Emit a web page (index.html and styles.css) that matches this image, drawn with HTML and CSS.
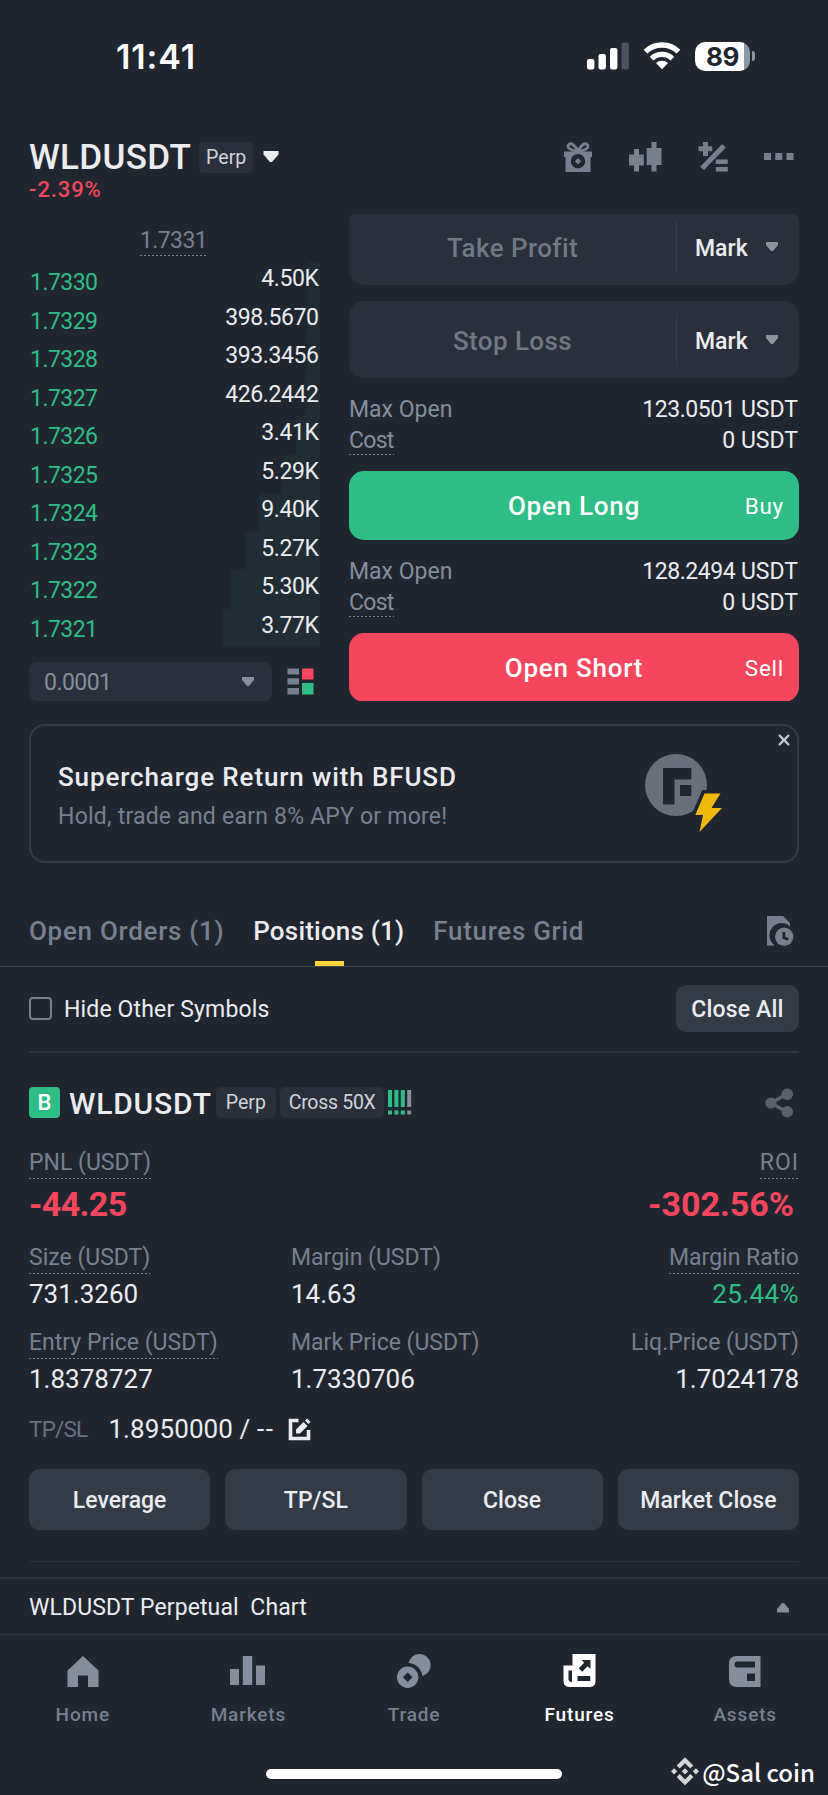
FILE: index.html
```html
<!DOCTYPE html>
<html lang="en">
<head>
  <meta charset="utf-8">
  <title>WLDUSDT Perp - Futures</title>
  <link rel="stylesheet" href="styles.css">
</head>
<body>
  <div class="screen">
    <div class="status-bar">
      <span class="clock">11:41</span>
      <div class="status-icons">
        <svg class="signal" width="42" height="28" viewBox="0 0 42 28">
          <g fill="#fff">
            <rect x="0" y="17" width="7.4" height="10.5" rx="2"/>
            <rect x="11.5" y="12" width="7.4" height="15.5" rx="2"/>
            <rect x="23" y="6" width="7.4" height="21.5" rx="2"/>
          </g>
          <rect x="34.5" y="0.5" width="7.4" height="27" rx="2" fill="#4d535e"/>
        </svg>
        <svg class="wifi" width="38" height="28" viewBox="0 0 38 28">
          <g fill="none" stroke="#fff" stroke-width="5.4">
            <path d="M2.5 9.6a24 24 0 0 1 33 0"/>
            <path d="M8.6 16.6a15 15 0 0 1 20.8 0"/>
          </g>
          <path d="M19 27.3l-6-6.2a9 9 0 0 1 12 0z" fill="#fff"/>
        </svg>
        <div class="battery"><span>89</span></div>
        <div class="battery-tip"></div>
      </div>
    </div>

    <div class="header">
      <div class="header-row">
        <h1>WLDUSDT</h1>
        <span class="chip">Perp</span>
        <svg class="pair-caret" width="16" height="13" viewBox="0 0 16 13"><path d="M.5 0h15v3.500L9 11H7L.5 3.500z" fill="#eaecef"/></svg>
        <div class="header-icons">
          <svg width="30" height="32" viewBox="0 0 30 32">
            <g fill="none" stroke="#76808f" stroke-width="2.800">
              <path d="M15 10C12 4 8 1.500 5.800 3.500 3.500 6 6 9.500 15 10z"/>
              <path d="M15 10C18 4 22 1.500 24.200 3.500 26.500 6 24 9.500 15 10z"/>
            </g>
            <path fill="#76808f" fill-rule="evenodd" d="M1 10.500h28v5.500h-1.500v15h-25V16H1zM15 13a7.200 7.200 0 1 0 0 14.400A7.200 7.200 0 1 0 15 13z"/>
            <path fill="#76808f" d="M15 17l3.200 3.200L15 23.400l-3.200-3.200z"/>
          </svg>
          <svg width="34" height="32" viewBox="0 0 34 32">
            <path fill="#76808f" d="M6 8h5v5.500h4.800v11H11V30.500H6v-6H1v-11h5zM23.500 1h5v6h5v17h-5v6.500h-5V24h-4.800V7h4.800z"/>
          </svg>
          <svg width="32" height="32" viewBox="0 0 32 32">
            <path fill="#76808f" d="M6 1h5v4.300h4.300v5H11V15H6v-4.700H1.500v-5H6zM25 3.200l3.800 3.300L7 29l-3.800-3.300zM18.800 18.500h12V23h-12zM18.800 26h12v4.500h-12z"/>
          </svg>
          <svg width="30" height="32" viewBox="0 0 30 32">
            <path fill="#76808f" d="M0 12h7v7H0zM11.300 12h7v7h-7zM22.500 12h7v7h-7z"/>
          </svg>
        </div>
      </div>
      <div class="change">-2.39%</div>
    </div>

    <div class="trade">
      <div class="book">
        <div class="mark-price"><span>1.7331</span></div>
        <div class="book-row"><i class="depth" style="width: 12px"></i><span class="price">1.7330</span><span class="amount">4.50K</span></div>
        <div class="book-row"><i class="depth" style="width: 13px"></i><span class="price">1.7329</span><span class="amount">398.5670</span></div>
        <div class="book-row"><i class="depth" style="width: 14px"></i><span class="price">1.7328</span><span class="amount">393.3456</span></div>
        <div class="book-row"><i class="depth" style="width: 15px"></i><span class="price">1.7327</span><span class="amount">426.2442</span></div>
        <div class="book-row"><i class="depth" style="width: 24px"></i><span class="price">1.7326</span><span class="amount">3.41K</span></div>
        <div class="book-row"><i class="depth" style="width: 38px"></i><span class="price">1.7325</span><span class="amount">5.29K</span></div>
        <div class="book-row"><i class="depth" style="width: 61px"></i><span class="price">1.7324</span><span class="amount">9.40K</span></div>
        <div class="book-row"><i class="depth" style="width: 75px"></i><span class="price">1.7323</span><span class="amount">5.27K</span></div>
        <div class="book-row"><i class="depth" style="width: 89px"></i><span class="price">1.7322</span><span class="amount">5.30K</span></div>
        <div class="book-row"><i class="depth" style="width: 98px"></i><span class="price">1.7321</span><span class="amount">3.77K</span></div>
        <div class="book-footer">
          <div class="tick-select">
            <span>0.0001</span>
            <svg width="12" height="10" viewBox="0 0 12 10"><path d="M0 0h12v3L7 9H5L0 3z" fill="#848e9c"/></svg>
          </div>
          <svg class="book-mode" width="27" height="27" viewBox="0 0 27 27">
            <path fill="#76808f" d="M.5.500H12V6.500H.5zM.5 10.300H12v6.200H.5zM.5 20H12v6.500H.5z"/>
            <path fill="#f6465d" d="M15 .500h11.500v11H15z"/>
            <path fill="#2ebd85" d="M15 15h11.500v11.500H15z"/>
          </svg>
        </div>
      </div>

      <div class="order-form">
        <div class="field">
          <span class="placeholder">Take Profit</span>
          <div class="trigger"><span>Mark</span> <svg width="12" height="10" viewBox="0 0 12 10"><path d="M0 0h12v3L7 9H5L0 3z" fill="#8b939f"/></svg></div>
        </div>
        <div class="field">
          <span class="placeholder">Stop Loss</span>
          <div class="trigger"><span>Mark</span> <svg width="12" height="10" viewBox="0 0 12 10"><path d="M0 0h12v3L7 9H5L0 3z" fill="#8b939f"/></svg></div>
        </div>
        <div class="info">
          <div class="info-row"><span>Max Open</span><b><span class="num">123.0501</span> USDT</b></div>
          <div class="info-row"><span class="dotted cost">Cost</span><b>0 USDT</b></div>
        </div>
        <div class="order-btn long"><span>Open Long</span><em>Buy</em></div>
        <div class="info">
          <div class="info-row"><span>Max Open</span><b><span class="num">128.2494</span> USDT</b></div>
          <div class="info-row"><span class="dotted cost">Cost</span><b>0 USDT</b></div>
        </div>
        <div class="order-btn short"><span>Open Short</span><em>Sell</em></div>
      </div>
    </div>

    <div class="banner">
      <div class="banner-text">
        <h2>Supercharge Return with BFUSD</h2>
        <p>Hold, trade and earn 8% APY or more!</p>
      </div>
      <svg class="banner-logo" width="80" height="80" viewBox="0 0 80 80">
        <circle cx="32" cy="32" r="31" fill="#69707b"/>
        <path fill="#202630" d="M19 15h28.300v11.500H30.500V51.500H19zM36 32h11.300v11H36z"/>
        <path fill="#f0b90b" stroke="#202630" stroke-width="7" paint-order="stroke" d="M60.500 40.500h16L67.500 55H78L55.500 79l3.500-17h-7.700z"/>
      </svg>
      <svg class="banner-close" width="12" height="12" viewBox="0 0 12 12"><path d="M1 1l10 10M11 1L1 11" stroke="#c6cad2" stroke-width="2.400"/></svg>
    </div>

    <div class="tabs">
      <span class="tab">Open Orders (1)</span>
      <span class="tab active">Positions (1)</span>
      <span class="tab">Futures Grid</span>
      <svg class="history" width="28" height="32" viewBox="0 0 28 32">
        <path fill="#76808f" d="M1 1h16l7 7v3.200A12 12 0 0 0 7.500 29.500L8.500 30.500H1z"/>
        <circle cx="18.200" cy="21.800" r="9.200" fill="#76808f"/>
        <path d="M17.800 17v5.500l4.500 2" fill="none" stroke="#202630" stroke-width="2.800"/>
      </svg>
    </div>

    <div class="filter">
      <i class="checkbox"></i>
      <span>Hide Other Symbols</span>
      <div class="close-all">Close All</div>
    </div>

    <div class="position">
      <div class="position-head">
        <span class="side">B</span>
        <h3>WLDUSDT</h3>
        <span class="chip">Perp</span>
        <span class="chip cross">Cross 50X</span>
        <svg class="adl" width="24" height="26" viewBox="0 0 24 26">
          <path fill="#2ebd85" d="M0 0h4v17H0zM6.400 0h4v17h-4zM12.800 0h4v17h-4zM0 20.500h4v4H0zM6.400 20.500h4v4h-4zM12.800 20.500h4v4h-4z"/>
          <path fill="#848e9c" d="M19.200 0h4v17h-4zM19.200 20.500h4v4h-4z"/>
        </svg>
        <svg class="share" width="29" height="30" viewBox="0 0 29 30">
          <g fill="#5a616d">
            <circle cx="6" cy="15" r="5.600"/><circle cx="22.300" cy="6.200" r="5.700"/><circle cx="22.300" cy="23.800" r="5.700"/>
          </g>
          <path d="M22 6L6 15l16 9" fill="none" stroke="#5a616d" stroke-width="3.600"/>
        </svg>
      </div>

      <div class="metrics">
        <div class="metric pnl"><label class="dotted">PNL (USDT)</label><div class="value">-44.25</div></div>
        <div></div>
        <div class="metric pnl roi right"><label class="dotted">ROI</label><div class="value">-302.56%</div></div>
        <div class="metric"><label class="dotted">Size (USDT)</label><div class="value">731.3260</div></div>
        <div class="metric"><label>Margin (USDT)</label><div class="value">14.63</div></div>
        <div class="metric right"><label class="dotted">Margin Ratio</label><div class="value up">25.44%</div></div>
        <div class="metric"><label class="dotted">Entry Price (USDT)</label><div class="value">1.8378727</div></div>
        <div class="metric"><label>Mark Price (USDT)</label><div class="value">1.7330706</div></div>
        <div class="metric right"><label>Liq.Price (USDT)</label><div class="value">1.7024178</div></div>
      </div>

      <div class="tpsl">
        <label>TP/SL</label>
        <span class="value">1.8950000 / <span class="empty">--</span></span>
        <svg width="23" height="23" viewBox="0 0 23 23">
          <path d="M10.500 2.500H2.500v18h18v-8.500" fill="none" stroke="#eaecef" stroke-width="3.600"/>
          <path fill="#eaecef" d="M8 11.500l7.500-7.500 4 4-7.500 7.500H8zM17 2.600L19 .5l3.600 3.600-2.100 2z"/>
        </svg>
      </div>

      <div class="actions">
        <div class="action">Leverage</div>
        <div class="action">TP/SL</div>
        <div class="action">Close</div>
        <div class="action">Market Close</div>
      </div>
    </div>

    <div class="chart-bar">
      <span>WLDUSDT Perpetual&nbsp; Chart</span>
      <svg width="12" height="10" viewBox="0 0 12 10"><path d="M0 9.500h12V6L7 0H5L0 6z" fill="#848e9c"/></svg>
    </div>

    <div class="nav">
      <div class="nav-item">
        <svg width="36" height="36" viewBox="0 0 36 36"><path fill="#848e9c" d="M18 3L33.500 17.500V34H23V22.500H13V34H2.500V17.500z"/></svg>
        <span>Home</span>
      </div>
      <div class="nav-item">
        <svg width="36" height="36" viewBox="0 0 36 36"><path fill="#848e9c" d="M0 16h9v16H0zM12.800 3h9.400v29h-9.400zM26 12.500h9V32h-9z"/></svg>
        <span>Markets</span>
      </div>
      <div class="nav-item">
        <svg width="36" height="36" viewBox="0 0 36 36">
          <path fill="#848e9c" d="M12.500 10A11.200 11.200 0 1 1 26.500 23A15 15 0 0 0 12.500 10z"/>
          <path fill="#848e9c" fill-rule="evenodd" d="M11.700 13.500a10.700 10.700 0 1 0 0 21.400a10.700 10.700 0 1 0 0-21.400zM11.700 19.400l4.800 4.800-4.800 4.800-4.800-4.800z"/>
        </svg>
        <span>Trade</span>
      </div>
      <div class="nav-item active">
        <svg width="36" height="36" viewBox="0 0 36 36">
          <path fill="#fff" d="M10.500 1h23v27q0 6-6 6H8q-6.500 0-6.500-6V12.500h9z"/>
          <path fill="#202630" d="M6.500 17.500H10V29q-3.500 0-3.500-3zM15.500 23h12.800v5H15.500zM19.500 7h9v9l-2.800-2.800-5.500 5.500-3.500-3.500 5.500-5.500z"/>
        </svg>
        <span>Futures</span>
      </div>
      <div class="nav-item">
        <svg width="36" height="36" viewBox="0 0 36 36">
          <path fill="#848e9c" d="M10 3h23.500v31H10q-8 0-8-8V11q0-8 8-8z"/>
          <path fill="#202630" d="M10.500 8.500H28v6H10.500q-3 0-3-3t3-3zM20 20.500h8v7.500h-8z"/>
        </svg>
        <span>Assets</span>
      </div>
    </div>

    <div class="home-indicator"></div>

    <div class="watermark">
      <svg width="28" height="29" viewBox="0 0 28 29">
        <g fill="#d4d5d7">
          <path d="M14 .300l8.300 8.200-3 3L14 6.200l-5.300 5.300-3-3zM14 28.300l8.300-8.200-3-3L14 22.400l-5.300-5.300-3 3z"/>
          <path d="M14 11.200l3.200 3.100L14 17.400l-3.200-3.100zM3.100 11.200l3.100 3.100-3.100 3.100L0 14.300zM24.900 11.200l3.100 3.100-3.100 3.100-3.100-3.100z"/>
        </g>
      </svg>
      <span>@Sal coin</span>
    </div>
  </div>
</body>
</html>
```

FILE: styles.css
```css
* {
  box-sizing: border-box;
}

body {
  margin: 0;
  background-color: #202630;
  color: #eaecef;
  font-family: Roboto, sans-serif;
  font-size: 23px;
}

h1, h2, h3, p {
  margin: 0;
}

svg {
  display: block;
  flex-shrink: 0;
}

.screen {
  position: relative;
  width: 828px;
  height: 1795px;
  display: flex;
  flex-direction: column;
  overflow: hidden;
}

/* Status bar */
.status-bar {
  height: 112px;
  padding: 0 73px 0 116px;
  display: flex;
  align-items: center;
  justify-content: space-between;
}

.clock {
  font-family: Inter, sans-serif;
  font-size: 34px;
  font-weight: 600;
  color: #fff;
  letter-spacing: 0.9px;
}

.status-icons {
  display: flex;
  align-items: center;
}

.wifi {
  margin: 0 14px;
}

.battery {
  width: 55px;
  height: 29px;
  border-radius: 10px;
  background: linear-gradient(to right, #fff 49px, #8d96a3 49px);
  color: #202630;
  font-family: Inter, sans-serif;
  font-size: 26px;
  font-weight: 700;
  line-height: 29px;
  text-align: center;
  letter-spacing: -0.3px;
}

.battery-tip {
  width: 3px;
  height: 10px;
  margin-left: 2px;
  border-radius: 0 4px 4px 0;
  background-color: #8d96a3;
}

/* Pair header */
.header {
  height: 102px;
  padding: 29px 34px 0 29px;
}

.header-row {
  display: flex;
  align-items: center;
  height: 32px;
}

h1 {
  font-size: 35px;
  font-weight: 500;
  line-height: 32px;
  letter-spacing: 0.3px;
  padding-top: 2px;
}

.chip {
  height: 31px;
  padding: 0 7px;
  border-radius: 5px;
  background-color: #29303b;
  color: #d0d4da;
  font-size: 19.5px;
  line-height: 32px;
}

.header .chip {
  margin-left: 8px;
}

.pair-caret {
  margin-left: 10px;
}

.header-icons {
  display: flex;
  gap: 35px;
  margin-left: auto;
}

.change {
  margin-top: 4px;
  font-size: 22px;
  font-weight: 500;
  line-height: 26px;
  letter-spacing: 0.9px;
  color: #f6465d;
}

/* Order book and order form */
.trade {
  display: flex;
  gap: 29px;
  height: 487px;
  padding: 0 29px;
}

.book {
  width: 291px;
  letter-spacing: -0.55px;
}

.mark-price {
  height: 48px;
  padding-top: 10px;
  text-align: center;
  color: #76808f;
}

.mark-price span {
  display: inline-block;
  height: 32px;
  line-height: 33px;
  margin-right: 2px;
}

/* Dotted underline under the tappable labels */
.mark-price span,
.dotted {
  background: repeating-linear-gradient(to right, #76808f 0 2px, transparent 2px 4px) left bottom / 100% 1.5px no-repeat;
}

.book-row {
  position: relative;
  display: flex;
  justify-content: space-between;
  height: 38.5px;
  padding: 0 1.5px 0 1px;
  line-height: 41px;
}

.depth {
  position: absolute;
  top: 0;
  right: 0;
  height: 100%;
  background-color: #212d35;
}

.price {
  position: relative;
  color: #2ebd85;
}

.amount {
  position: relative;
  line-height: 34px;
  letter-spacing: -0.4px;
}

.book-footer {
  display: flex;
  align-items: center;
  gap: 15px;
  margin-top: 15px;
}

.tick-select {
  display: flex;
  align-items: center;
  justify-content: space-between;
  width: 243px;
  height: 39px;
  padding: 0 18px 0 15px;
  border-radius: 8px;
  background-color: #29303b;
  color: #848e9c;
}

.tick-select span {
  padding-top: 2px;
}

.order-form {
  width: 450px;
  overflow: hidden;
}

.field {
  display: flex;
  align-items: center;
  height: 77px;
  border-radius: 15px;
  background-color: #29303b;
}

/* First field is scrolled slightly under the header */
.field:first-child {
  margin-top: -6px;
  margin-bottom: 16px;
}

.placeholder {
  flex: 1;
  padding-top: 2px;
  text-align: center;
  font-size: 26px;
  font-weight: 500;
  letter-spacing: 0.4px;
  color: #6f7985;
}

.trigger {
  display: flex;
  align-items: center;
  justify-content: space-between;
  width: 123px;
  height: 54px;
  padding: 0 21px 0 18px;
  border-left: 1px solid #333b47;
  font-weight: 500;
}

.trigger span {
  padding-top: 3px;
}

.info {
  padding: 15px 1px 16px 0;
}

.info-row {
  display: flex;
  justify-content: space-between;
  height: 31px;
  line-height: 33px;
  color: #848e9c;
}

.info-row b {
  font-weight: 400;
  color: #eaecef;
}

.num {
  letter-spacing: -0.45px;
}

.cost {
  letter-spacing: -0.7px;
}

.order-btn {
  position: relative;
  height: 69px;
  border-radius: 15px;
  color: #fff;
  font-size: 26px;
  font-weight: 500;
  line-height: 71px;
  letter-spacing: 0.75px;
  text-align: center;
}

.order-btn em {
  position: absolute;
  right: 15px;
  font-size: 22.5px;
  font-style: normal;
  font-weight: 400;
}

.long {
  background-color: #2ebd85;
}

.short {
  background-color: #f6465d;
}

/* Promo banner */
.banner {
  position: relative;
  display: flex;
  justify-content: space-between;
  height: 139px;
  margin: 23px 29px 0;
  padding: 27px 73px 0 27px;
  border: 2px solid #333b47;
  border-radius: 16px;
}

h2 {
  margin-top: 6px;
  font-size: 26px;
  font-weight: 500;
  line-height: 36px;
  letter-spacing: 0.88px;
}

.banner p {
  margin-top: 4px;
  line-height: 36px;
  letter-spacing: 0.22px;
  color: #76808f;
}

.banner-close {
  position: absolute;
  top: 8px;
  right: 7px;
}

/* Tabs */
.tabs {
  display: flex;
  height: 64px;
  margin-top: 40px;
  padding: 0 34px 0 29px;
  border-bottom: 1px solid #3a424e;
  font-size: 26px;
  font-weight: 500;
  line-height: 57px;
  letter-spacing: 0.7px;
  color: #76808f;
}

.tab {
  position: relative;
  margin-right: 29px;
}

.tab.active {
  color: #eaecef;
  letter-spacing: 0.2px;
}

.tab.active::after {
  content: "";
  position: absolute;
  left: 50%;
  bottom: 0;
  width: 29px;
  height: 5px;
  margin-left: -14px;
  background-color: #fcd535;
}

.history {
  margin: 12px 0 0 auto;
}

.filter {
  display: flex;
  align-items: center;
  height: 86px;
  margin: 0 29px;
  border-bottom: 2px solid #2d3540;
  letter-spacing: 0.15px;
}

.checkbox {
  width: 23px;
  height: 23px;
  margin: -1px 12px 0 0;
  border: 2px solid #76808f;
  border-radius: 4px;
}

.close-all {
  height: 47px;
  margin-top: -1px;
  margin-left: auto;
  padding: 0 15.5px;
  border-radius: 10px;
  background-color: #333b47;
  font-weight: 500;
  line-height: 49px;
}

/* Position card */
.position {
  height: 509px;
  margin: 0 29px;
  padding-top: 34px;
  border-bottom: 1px solid #2b323d;
}

.position-head {
  display: flex;
  align-items: center;
  height: 31px;
}

.side {
  width: 31px;
  height: 31px;
  border-radius: 4px;
  background-color: #2ebd85;
  color: #fff;
  font-size: 22px;
  font-weight: 500;
  line-height: 31px;
  text-align: center;
}

h3 {
  margin-left: 9px;
  padding-top: 2px;
  font-size: 30px;
  font-weight: 500;
  letter-spacing: 0.8px;
}

.position .chip {
  margin-left: 4px;
  padding: 0 10px;
}

.position .cross {
  padding: 0 9px;
  letter-spacing: -0.3px;
}

.adl {
  margin-left: 4px;
}

.share {
  margin: 0 5px 0 auto;
}

.metrics {
  display: grid;
  grid-template-columns: 262px 254px 254px;
  grid-template-rows: 95px 85px 85px;
  margin-top: 29px;
}

.metric {
  display: flex;
  flex-direction: column;
  align-items: flex-start;
}

.metric.right {
  align-items: flex-end;
}

.metric label {
  height: 32px;
  line-height: 31px;
  color: #76808f;
}

.value {
  font-size: 26px;
  line-height: 41px;
}

.value.up {
  letter-spacing: 0.4px;
  color: #2ebd85;
}

.pnl .value {
  margin-top: 5px;
  font-size: 34px;
  font-weight: 700;
  line-height: 40px;
  letter-spacing: -0.6px;
  color: #f6465d;
}

.roi label {
  letter-spacing: 1px;
}

.roi .value {
  margin-right: 5px;
  letter-spacing: 0;
}

.tpsl {
  display: flex;
  align-items: center;
  height: 34px;
}

.tpsl label {
  font-size: 22.5px;
  letter-spacing: -0.8px;
  color: #69727f;
}

.tpsl .value {
  margin: 0 14px 0 21px;
  letter-spacing: 0.1px;
}

.tpsl .empty {
  letter-spacing: 1.5px;
}

.actions {
  display: grid;
  grid-template-columns: repeat(4, 1fr);
  gap: 15px;
  margin-top: 23px;
}

.action {
  height: 61px;
  border-radius: 11px;
  background-color: #333b47;
  font-weight: 500;
  line-height: 63px;
  text-align: center;
}

.chart-bar {
  display: flex;
  align-items: center;
  justify-content: space-between;
  height: 58px;
  margin-top: 15px;
  padding: 2px 39px 0 29px;
  border-top: 2px solid #2b323d;
  border-bottom: 1px solid #303742;
  letter-spacing: 0.1px;
}

/* Bottom navigation */
.nav {
  display: grid;
  grid-template-columns: repeat(5, 1fr);
  padding-top: 18px;
}

.nav-item {
  display: flex;
  flex-direction: column;
  align-items: center;
  gap: 14px;
  font-size: 19px;
  font-weight: 500;
  line-height: 24px;
  letter-spacing: 0.85px;
  color: #76808f;
}

.nav-item.active {
  color: #fff;
}

.home-indicator {
  width: 296px;
  height: 10px;
  margin: 42px auto 0;
  border-radius: 5px;
  background-color: #fff;
}

.watermark {
  position: absolute;
  right: 13px;
  bottom: 9px;
  display: flex;
  align-items: center;
  gap: 3px;
  font-family: "Noto Sans CJK SC", "Noto Sans", sans-serif;
  font-size: 24px;
  font-weight: 500;
  line-height: 28px;
  color: #fff;
}
```
